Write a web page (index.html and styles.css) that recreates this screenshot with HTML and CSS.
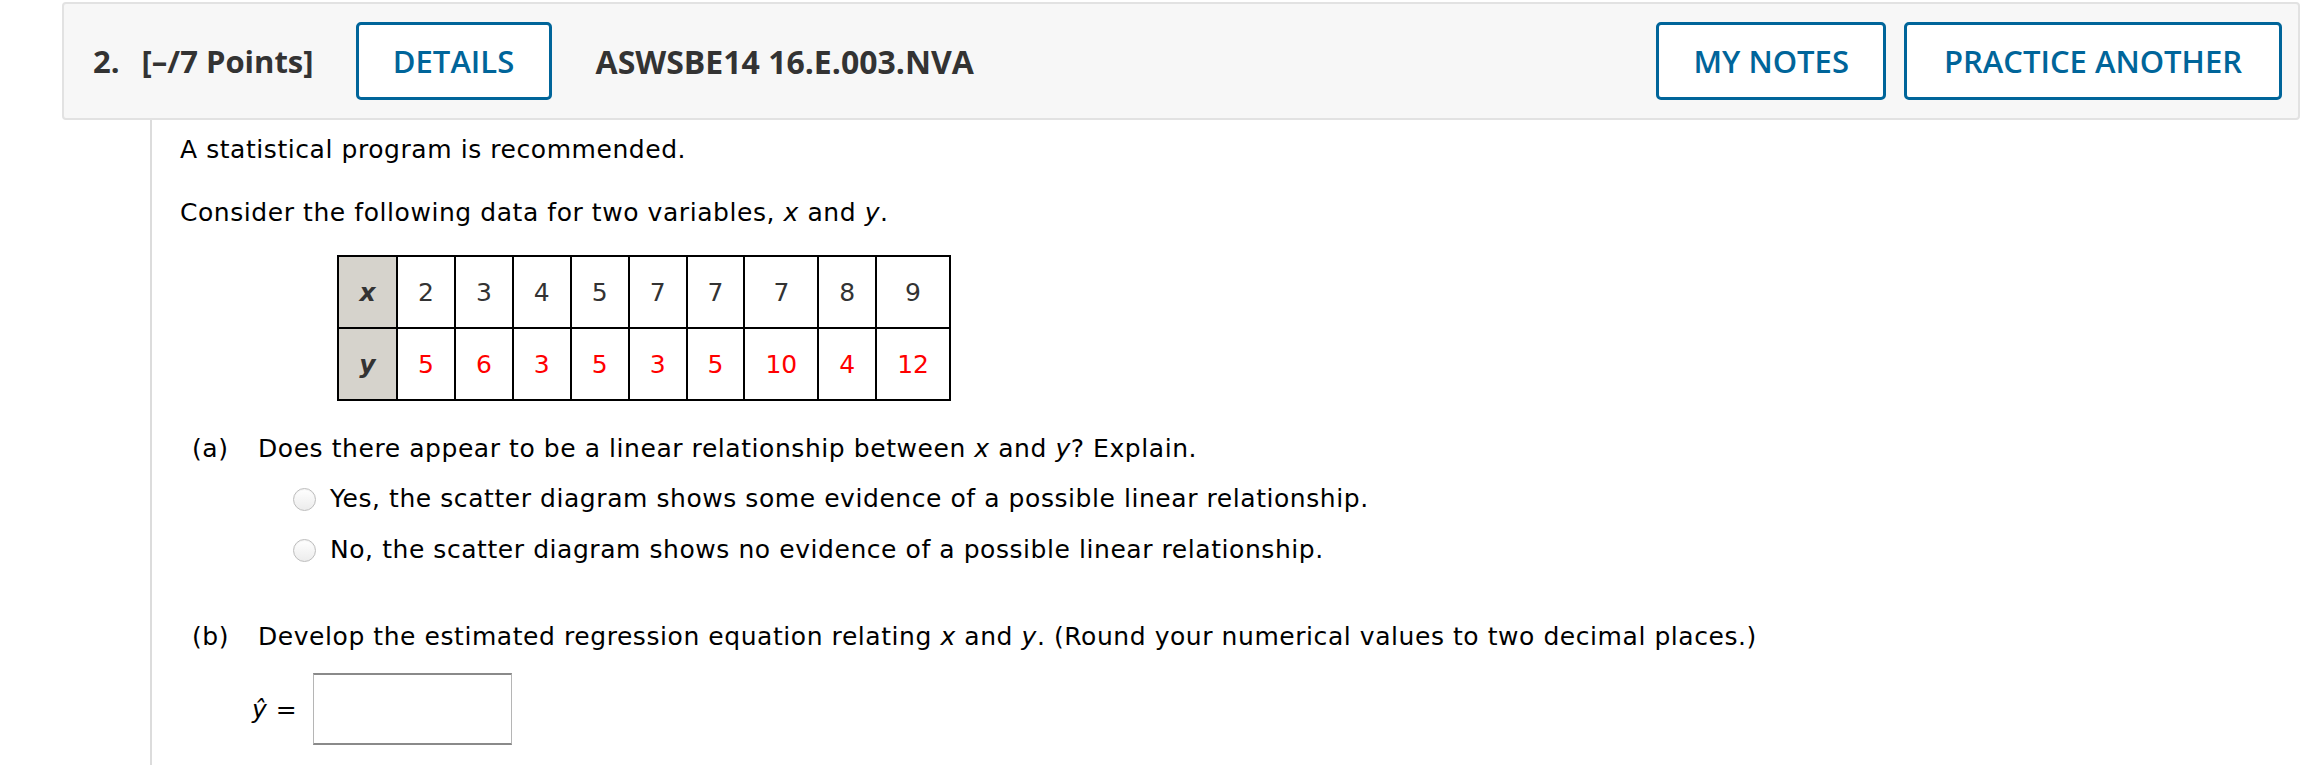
FILE: index.html
```html
<!DOCTYPE html>
<html>
<head>
<meta charset="utf-8">
<link rel="stylesheet" href="styles.css">
</head>
<body>
<div class="qhead">
  <span class="qnum">2.</span>
  <span class="qpts">[–/7 Points]</span>
  <button class="qbtn details">DETAILS</button>
  <span class="qid">ASWSBE14 16.E.003.NVA</span>
  <span class="spacer"></span>
  <button class="qbtn">MY NOTES</button>
  <button class="qbtn practice">PRACTICE ANOTHER</button>
</div>
<div class="qbody">
  <p class="p1">A statistical program is recommended.</p>
  <p class="p2">Consider the following data for two variables, <i>x</i> and <i>y</i>.</p>
  <table class="data">
    <tr>
      <th><i>x</i></th>
      <td>2</td><td>3</td><td>4</td><td>5</td><td>7</td><td>7</td><td>7</td><td>8</td><td>9</td>
    </tr>
    <tr class="red">
      <th><i>y</i></th>
      <td>5</td><td>6</td><td>3</td><td>5</td><td>3</td><td>5</td><td>10</td><td>4</td><td>12</td>
    </tr>
  </table>
  <div class="part pa">
    <span class="plabel">(a)</span>
    <span>Does there appear to be a linear relationship between <i>x</i> and <i>y</i>? Explain.</span>
  </div>
  <div class="opts">
    <label class="opt"><span class="radio"></span><span>Yes, the scatter diagram shows some evidence of a possible linear relationship.</span></label>
    <label class="opt"><span class="radio"></span><span>No, the scatter diagram shows no evidence of a possible linear relationship.</span></label>
  </div>
  <div class="part pb">
    <span class="plabel">(b)</span>
    <span>Develop the estimated regression equation relating <i>x</i> and <i>y</i>. (Round your numerical values to two decimal places.)</span>
  </div>
  <div class="eq">
    <span class="yhat"><i>y&#770;</i> =</span>
    <span class="inbox"></span>
  </div>
</div>
</body>
</html>
```
FILE: styles.css
```css
html, body {
  margin: 0;
  padding: 0;
  background: #ffffff;
}
body {
  font-family: "DejaVu Sans", Verdana, sans-serif;
  font-size: 25px;
  letter-spacing: 0.56px;
  color: #000;
  width: 2301px;
  height: 765px;
  overflow: hidden;
}
.qhead {
  margin: 2px 1px 0 62px;
  box-sizing: border-box;
  height: 118px;
  border: 2px solid #e2e2e2;
  border-radius: 4px;
  background: #f7f7f7;
  display: flex;
  align-items: center;
  padding: 0 16px 0 29px;
  font-family: "Open Sans", sans-serif;
  color: #333333;
  letter-spacing: 0;
}
.qnum {
  font-weight: 700;
  font-size: 31px;
}
.qpts {
  font-weight: 700;
  font-size: 31px;
  margin-left: 22px;
}
.qid {
  font-weight: 700;
  font-size: 32px;
  margin-left: 44px;
}
.spacer { flex: 1; }
.qbtn {
  font-family: "Open Sans", sans-serif;
  font-weight: 600;
  font-size: 31px;
  letter-spacing: 0;
  color: #00659a;
  background: #ffffff;
  border: 3px solid #00659a;
  border-radius: 5px;
  height: 78px;
  padding: 0 34px;
  margin-left: 18px;
  line-height: 1;
}
.qbtn.practice {
  padding: 0 37px;
}
.qbtn.details {
  margin-left: 42px;
  width: 196px;
  padding: 0;
}
.qbody {
  margin-left: 150px;
  border-left: 2px solid #dcdcdc;
  padding-left: 28px;
  height: 645px;
  box-sizing: border-box;
  padding-top: 12px;
}
p {
  margin: 0;
  line-height: 36px;
}
.p2 { margin-top: 27px; }
.data {
  border-collapse: collapse;
  margin-top: 24px;
  margin-left: 157px;
  color: #333333;
  letter-spacing: 0;
}
.data th, .data td {
  border: 2px solid #000;
  height: 70px;
  padding: 0 20px;
  text-align: center;
  font-weight: normal;
  line-height: 1;
}
.data th {
  background: #d6d3cc;
  font-weight: bold;
  width: 17px;
  padding: 0 20px;
}
.data tr.red td { color: #ff0000; }
.part {
  display: flex;
  line-height: 36px;
  margin-left: 12px;
}
.plabel { width: 66px; }
.pa { margin-top: 30px; }
.opts {
  display: flex;
  flex-direction: column;
  gap: 15px;
  margin-top: 14px;
  margin-left: 113px;
}
.opt {
  display: flex;
  align-items: center;
  line-height: 36px;
}
.radio {
  width: 21px;
  height: 21px;
  border: 1px solid #bdbdbd;
  border-radius: 50%;
  background: linear-gradient(#ffffff, #ececec);
  margin-right: 14px;
  box-shadow: inset 0 1px 1px rgba(0,0,0,0.05);
}
.pb { margin-top: 51px; }
.eq {
  display: flex;
  align-items: center;
  margin-top: 18px;
  margin-left: 72px;
}
.yhat { margin-right: 16px; }
.inbox {
  width: 197px;
  height: 68px;
  border: 1px solid #b5b5b5;
  border-top: 2px solid #8a8a8a;
  border-bottom: 2px solid #8a8a8a;
  background: #fff;
}
```
